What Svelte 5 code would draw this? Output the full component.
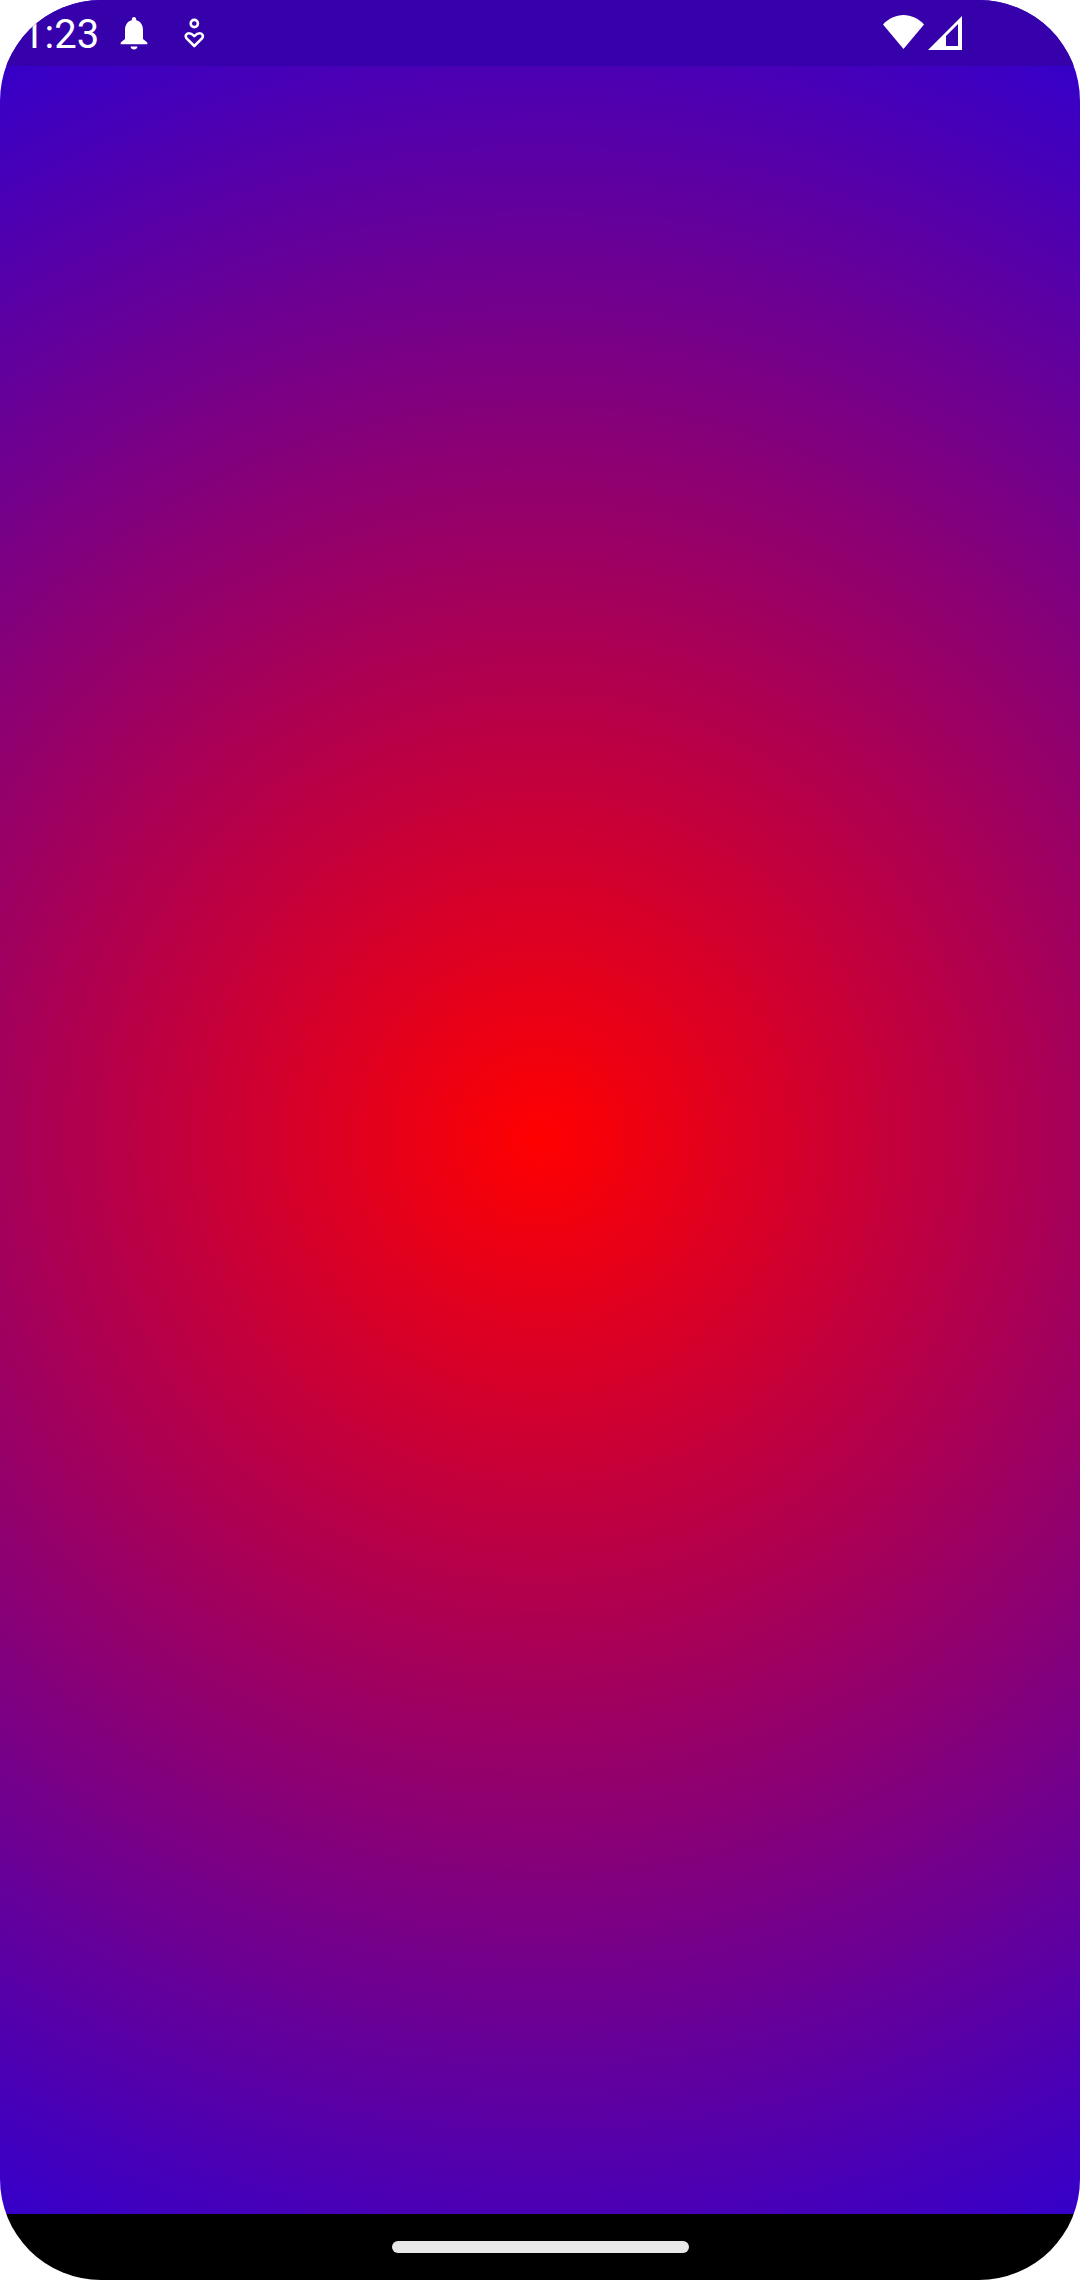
<script>
  const time = '1:23';
</script>

<div class="screen">
  <header class="status-bar">
    <div class="status-left">
      <span class="time">{time}</span>
      <svg class="bell" viewBox="0 0 30 34" width="30" height="34">
        <path d="M15 0c1.300 0 2.200 1 2.200 2.300v1C21.800 4.500 24 8.400 24 12.800v9.200l4.300 3.600v1.600H1.700v-1.600L6 22v-9.200c0-4.400 2.200-8.300 6.800-9.500v-1C12.800 1 13.700 0 15 0z" fill="#fff" />
        <path d="M11.500 29.500h7c-.3 1.900-1.700 3-3.500 3s-3.200-1.100-3.500-3z" fill="#fff" />
      </svg>
      <svg class="care" viewBox="0 0 21 31" width="21" height="31">
        <circle cx="10.300" cy="5.500" r="3.600" fill="none" stroke="#fff" stroke-width="2.600" />
        <path d="M10.300 28L2.600 20.300c-1.700-2-.6-5 2.200-5 1.800 0 3.600 1 5.500 2.800 1.900-1.800 3.700-2.800 5.500-2.800 2.800 0 3.900 3 2.200 5z" fill="none" stroke="#fff" stroke-width="2.600" stroke-linejoin="round" />
      </svg>
    </div>
    <div class="status-right">
      <svg class="wifi" viewBox="0 0 42 36" width="42" height="36">
        <path d="M0 9.500C5.500 3.500 13 0 20.500 0S35.500 3.500 41 9.500L20.500 34z" fill="#fff" />
      </svg>
      <svg class="signal" viewBox="0 0 36 36" width="36" height="36">
        <path fill-rule="evenodd" d="M35 1V35H1zM31 9L19 21V31H31z" fill="#fff" />
      </svg>
    </div>
  </header>
  <main class="content"></main>
  <nav class="nav-bar">
    <div class="home-pill"></div>
  </nav>
</div>

<style>
  :global(body) {
    margin: 0;
    background: #fff;
  }

  .screen {
    position: relative;
    display: flex;
    flex-direction: column;
    width: 1080px;
    height: 2280px;
    overflow: hidden;
    border-radius: 101px;
    font-family: Roboto, "Liberation Sans", sans-serif;
  }

  .status-bar {
    position: absolute;
    top: 0;
    left: 0;
    right: 0;
    height: 66px;
    display: flex;
    justify-content: space-between;
    background: #3600aa;
    color: #fff;
  }

  .status-left {
    display: flex;
    align-items: flex-start;
    padding-left: 22px;
  }

  .time {
    font-size: 40px;
    line-height: 47px;
    margin-top: 11px;
    width: 97px;
  }

  .bell {
    margin-top: 17px;
  }

  .care {
    margin-top: 18px;
    margin-left: 35px;
  }

  .status-right {
    display: flex;
    align-items: flex-start;
    padding-right: 117px;
  }

  .wifi {
    margin-top: 15px;
    margin-right: 2px;
  }

  .signal {
    margin-top: 15px;
  }

  .content {
    flex: 1;
    background: radial-gradient(circle 1520px at 50% 1138px, #f00 0%, #00f 100%);
  }

  .nav-bar {
    flex: 0 0 66px;
    display: flex;
    justify-content: center;
    background: #000;
  }

  .home-pill {
    width: 297px;
    height: 12px;
    margin-top: 27px;
    border-radius: 6px;
    background: #e8e8e8;
  }
</style>
